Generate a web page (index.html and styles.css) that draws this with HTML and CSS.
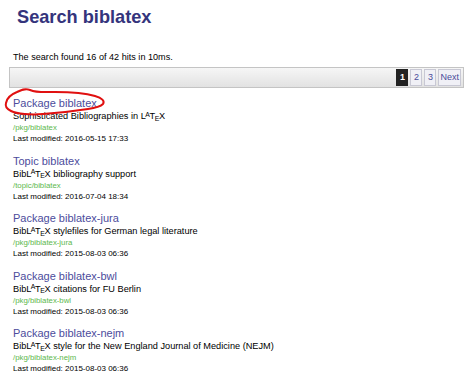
FILE: index.html
```html
<!DOCTYPE html>
<html lang="en">

<head>
    <meta charset="UTF-8">
    <title>Search biblatex</title>
    <link rel="stylesheet" href="styles.css">
</head>

<body>
    <div class="page">
        <h1>Search biblatex</h1>

        <p class="summary">The search found 16 of 42 hits in 10ms.</p>

        <div class="pager-bar">
            <span class="page-btn current">1</span>
            <a class="page-btn" href="#">2</a>
            <a class="page-btn" href="#">3</a>
            <a class="page-btn" href="#">Next</a>
        </div>

        <div class="results">
            <!-- hand drawn mark around the first hit -->
            <svg class="scribble" width="104" height="32" viewBox="0 0 104 32">
                <path d="M3 16 C4 10 9 7 14 5 C18 3 22 1 27 3 C34 6 42 5 52 5 C66 5 82 6 92 9 C99 11 102 14 100 17 C97 20 92 21 85 22 C72 24 55 26 40 27 C28 28 14 27 8 24 C4 22 2 19 3 16"
                    fill="none" stroke="#e01010" stroke-width="2" stroke-linecap="round" />
            </svg>

            <div class="hit">
                <a class="hit-title" href="#">Package biblatex</a>
                <div class="hit-desc">Sophisticated Bibliographies in <span class="latex">L<sup>a</sup>T<sub>e</sub>X</span></div>
                <div class="hit-path">/pkg/biblatex</div>
                <div class="hit-date">Last modified: 2016-05-15 17:33</div>
            </div>

            <div class="hit">
                <a class="hit-title" href="#">Topic biblatex</a>
                <div class="hit-desc">Bib<span class="latex">L<sup>a</sup>T<sub>e</sub>X</span> bibliography support</div>
                <div class="hit-path">/topic/biblatex</div>
                <div class="hit-date">Last modified: 2016-07-04 18:34</div>
            </div>

            <div class="hit">
                <a class="hit-title" href="#">Package biblatex-jura</a>
                <div class="hit-desc">Bib<span class="latex">L<sup>a</sup>T<sub>e</sub>X</span> stylefiles for German legal literature</div>
                <div class="hit-path">/pkg/biblatex-jura</div>
                <div class="hit-date">Last modified: 2015-08-03 06:36</div>
            </div>

            <div class="hit">
                <a class="hit-title" href="#">Package biblatex-bwl</a>
                <div class="hit-desc">Bib<span class="latex">L<sup>a</sup>T<sub>e</sub>X</span> citations for FU Berlin</div>
                <div class="hit-path">/pkg/biblatex-bwl</div>
                <div class="hit-date">Last modified: 2015-08-03 06:36</div>
            </div>

            <div class="hit">
                <a class="hit-title" href="#">Package biblatex-nejm</a>
                <div class="hit-desc">Bib<span class="latex">L<sup>a</sup>T<sub>e</sub>X</span> style for the New England Journal of Medicine (NEJM)</div>
                <div class="hit-path">/pkg/biblatex-nejm</div>
                <div class="hit-date">Last modified: 2015-08-03 06:36</div>
            </div>
        </div>
    </div>
</body>

</html>
```

FILE: styles.css
```css
body {
    margin: 0;
    background: #fff;
    color: #000;
    font-family: 'Liberation Sans', Arial, sans-serif;
}

.page {
    padding: 6px 10px 0 9px;
}

h1 {
    margin: 0 0 0 8px;
    font-size: 18.2px;
    line-height: 22px;
    color: #34347c;
}

.summary {
    margin: 23px 0 0 4px;
    font-size: 9.1px;
    line-height: 12px;
}

.pager-bar {
    display: flex;
    justify-content: flex-end;
    align-items: center;
    gap: 2px;
    margin-top: 4px;
    height: 19px;
    padding: 0 2px;
    border: 1px solid #c4c4c4;
    background: linear-gradient(#f6f6f6, #e2e2e2);
}

.page-btn {
    display: block;
    height: 15px;
    padding: 0 1px;
    font-size: 9px;
    line-height: 15px;
    text-align: center;
    min-width: 8px;
    border: 1px solid #c8c8d4;
    background: #f0f0f6;
    color: #4a4a9a;
    text-decoration: none;
}

.page-btn.current {
    background: #222;
    border-color: #222;
    color: #fff;
    font-weight: bold;
}

.results {
    position: relative;
    margin-top: 8px;
    padding-left: 4px;
}

.scribble {
    position: absolute;
    left: -6px;
    top: -9px;
}

.hit {
    margin-bottom: 8.5px;
}

.hit-title {
    display: block;
    font-size: 11px;
    line-height: 14px;
    color: #4c4c9c;
    text-decoration: none;
}

.hit-desc {
    font-size: 9.2px;
    line-height: 12px;
}

.hit-path {
    font-size: 7.8px;
    line-height: 11px;
    color: #5cb84c;
}

.hit-date {
    font-size: 8px;
    line-height: 12px;
}

.latex sup,
.latex sub {
    text-transform: uppercase;
    font-size: 0.75em;
    line-height: 0;
    vertical-align: 0;
    position: relative;
}

.latex sup {
    margin: 0 -0.05em 0 -0.1em;
    top: -0.3em;
}

.latex sub {
    margin: 0 -0.05em 0 -0.05em;
    top: 0.25em;
}
```
